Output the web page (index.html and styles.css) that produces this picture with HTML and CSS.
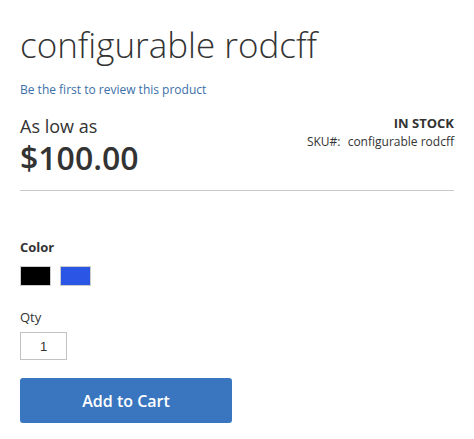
FILE: index.html
```html
<!DOCTYPE html>
<html lang="en">
<head>
    <meta charset="UTF-8">
    <title>configurable rodcff</title>
    <link rel="stylesheet" href="styles.css">
</head>
<body>
    <div class="product">
        <h1 class="product-title">configurable rodcff</h1>
        <a class="review-link" href="#">Be the first to review this product</a>

        <div class="info-main">
            <div class="price-box">
                <span class="price-label">As low as</span>
                <span class="price">$100.00</span>
            </div>
            <div class="stock-box">
                <div class="stock">In stock</div>
                <div class="sku"><span class="sku-label">SKU#:</span> configurable rodcff</div>
            </div>
        </div>

        <div class="options">
            <div class="field-label">Color</div>
            <div class="swatches">
                <span class="swatch swatch-black"></span>
                <span class="swatch swatch-blue"></span>
            </div>

            <div class="qty-label">Qty</div>
            <input class="qty" type="text" value="1">

            <button class="add-to-cart">Add to Cart</button>
        </div>
    </div>
</body>
</html>
```

FILE: styles.css
```css
body { margin: 0; font-family: "Open Sans", Arial, sans-serif; color: #333; background: #fff; }
.product { padding: 0 20px; }
.product-title { margin: 0; padding-top: 24px; font-size: 35px; font-weight: 300; line-height: 42px; color: #333; }
.review-link { display: block; margin-top: 16px; font-size: 12px; line-height: 16px; color: #3b6fa8; text-decoration: none; }
.info-main { display: flex; justify-content: space-between; margin-top: 16px; padding-bottom: 12px; border-bottom: 1px solid #c8c8c8; }
.price-box { display: flex; flex-direction: column; }
.price-label { font-size: 18px; line-height: 24px; }
.price { font-size: 32px; font-weight: 600; line-height: 40px; color: #333; }
.stock-box { text-align: right; }
.stock { font-size: 13px; line-height: 19px; font-weight: 700; text-transform: uppercase; }
.sku { font-size: 12px; line-height: 18px; }
.sku-label { margin-right: 4px; }
.options { padding-top: 47px; }
.field-label { font-size: 13px; font-weight: 700; line-height: 18px; }
.swatches { display: flex; gap: 9px; margin-top: 10px; }
.swatch { box-sizing: border-box; width: 31px; height: 20px; border: 1px solid #ccc; }
.swatch-black { background: #000; }
.swatch-blue { background: #2a55e5; }
.qty-label { margin-top: 22px; font-size: 13px; line-height: 18px; }
.qty { display: block; box-sizing: border-box; width: 47px; height: 28px; margin-top: 6px; border: 1px solid #c2c2c2; text-align: center; font-family: Arial, sans-serif; font-size: 13px; color: #333; }
.add-to-cart { display: block; margin-top: 18px; width: 212px; height: 45px; border: none; border-radius: 3px; background: #3a76bf; color: #fff; font-family: "Open Sans", Arial, sans-serif; font-size: 16px; font-weight: 600; }
```
